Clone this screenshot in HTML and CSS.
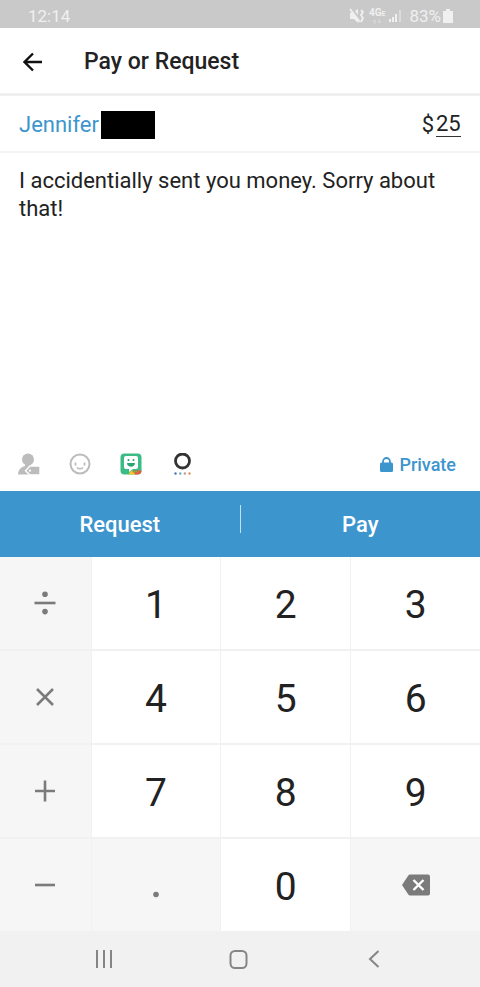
FILE: index.html
```html
<!DOCTYPE html>
<html lang="en">
<head>
<meta charset="utf-8">
<meta name="viewport" content="width=device-width, initial-scale=1">
<title>Pay or Request</title>
<link rel="stylesheet" href="styles.css">
</head>
<body>
<div class="status">
  <span>12:14</span>
  <div class="status-right">
    <svg width="16" height="16" viewBox="0 0 16 16" aria-hidden="true"><path d="M1 5l2-1 6 7v4l-4-4H1zM6 3l3-2v6z" fill="currentColor"/><path d="M1 1l10 13M12 2l2 2-2 3 2 3-2 4" fill="none" stroke="currentColor" stroke-width="1.800"/></svg>
    <span class="network"><b>4G<small>E</small></b><svg width="10" height="5" viewBox="0 0 10 5" aria-hidden="true"><path d="M3 5V1L1 3M7 0v4l2-2" fill="none" stroke="currentColor" opacity=".5"/></svg></span>
    <svg width="13" height="13" viewBox="0 0 13 13" aria-hidden="true"><path d="M1 13v-3M4 13V8M7 13V5" stroke="currentColor" stroke-width="2"/><path d="M11 13V1" stroke="currentColor" stroke-width="2" opacity=".5"/></svg>
    <span class="battery">83%<svg width="10" height="14" viewBox="0 0 10 14" aria-hidden="true"><path d="M3 0h4v2h3v12H0V2h3z" fill="currentColor"/></svg></span>
  </div>
</div>
<header class="header">
  <button class="back" type="button" aria-label="Back"><svg width="20" height="20" viewBox="0 0 20 20"><path d="M19 10H2M10 1.500L1.500 10l8.500 8.500" fill="none" stroke="currentColor" stroke-width="2.400"/></svg></button>
  <h1>Pay or Request</h1>
</header>
<main class="main">
  <div class="recipient">
    <a class="name" href="#">Jennifer</a><span class="redacted"></span>
    <label class="amount">$<input type="text" value="25" aria-label="Amount"></label>
  </div>
  <textarea class="note" aria-label="Note" spellcheck="false">I accidentially sent you money. Sorry about that!</textarea>
  <div class="tools">
    <button type="button" aria-label="Tag person"><svg width="22" height="22" viewBox="0 0 22 22"><circle cx="10" cy="6.500" r="6" fill="#bcbcbc"/><path d="M0 21.500c.5-5 2.500-7 7-8.500v-2h6v2l4 1.500v7z" fill="#bcbcbc"/><path d="M12 13h10v9H12l-4.500-4.200z" fill="#bcbcbc" stroke="#fff" stroke-width="1.400"/><circle cx="12" cy="17.700" r="1.100" fill="#fff"/></svg></button>
    <button type="button" aria-label="Emoji"><svg width="22" height="22" viewBox="0 0 22 22"><circle cx="11" cy="11" r="9.500" fill="none" stroke="#bcbcbc" stroke-width="2"/><path d="M6.500 9.500v3M15.500 9.500v3" stroke="#bcbcbc" stroke-width="1.800"/><path d="M8 14.500c1.500 1.800 4.500 1.800 6 0" fill="none" stroke="#bcbcbc" stroke-width="1.500"/></svg></button>
    <button type="button" aria-label="Bitmoji"><svg width="22" height="22" viewBox="0 0 22 22"><rect x=".5" y=".5" width="21" height="21" rx="4" fill="#3bbb86"/><path d="M6 3h10q2 0 2 2v9q0 2-2 2h-3l-4 3v-3H6q-2 0-2-2V5q0-2 2-2z" fill="#fff"/><path d="M7 10h8c0 5-8 5-8 0z" fill="#2ca574"/><path d="M8.500 6v2M13.500 6v2" stroke="#2ca574" stroke-width="1.600"/><path d="M9 21.500c0-2 1-3.500 4-4l3 4z" fill="#f3c52e"/><path d="M13 17.500h8.500q0 4-4 4H15z" fill="#e65b42"/><path d="M12 18h6l-2 1.500h-3z" fill="#8aa83c"/></svg></button>
    <button type="button" aria-label="Holler stickers"><svg width="22" height="22" viewBox="0 0 22 22"><circle cx="11.500" cy="8" r="7" fill="none" stroke="#333" stroke-width="2.800"/><circle cx="4.500" cy="20.500" r="1.200" fill="#4777a5"/><circle cx="9.200" cy="20.500" r="1.200" fill="#70a9cf"/><circle cx="13.900" cy="20.500" r="1.200" fill="#c79b90"/><circle cx="18.500" cy="20.500" r="1.200" fill="#dc925e"/></svg></button>
    <button class="privacy" type="button"><svg width="13" height="15" viewBox="0 0 13 15" aria-hidden="true"><rect y="5.500" width="13" height="9.500" rx="1.500" fill="currentColor"/><path d="M3 7V4.500a3.500 3.500 0 0 1 7 0V7" fill="none" stroke="currentColor" stroke-width="1.800"/></svg>Private</button>
  </div>
</main>
<div class="actions">
  <button type="button">Request</button>
  <i class="divider"></i>
  <button type="button">Pay</button>
</div>
<div class="keypad">
  <button class="op" type="button" aria-label="Divide"><svg width="22" height="24" viewBox="0 0 22 24"><path d="M.5 12h21" stroke="currentColor" stroke-width="2.600"/><circle cx="11" cy="3.200" r="2.800" fill="currentColor"/><circle cx="11" cy="20.600" r="2.800" fill="currentColor"/></svg></button>
  <button type="button">1</button>
  <button type="button">2</button>
  <button type="button">3</button>
  <button class="op" type="button" aria-label="Multiply"><svg width="22" height="22" viewBox="0 0 22 22"><path d="M3 3l16 16M19 3L3 19" stroke="currentColor" stroke-width="2.500"/></svg></button>
  <button type="button">4</button>
  <button type="button">5</button>
  <button type="button">6</button>
  <button class="op" type="button" aria-label="Add"><svg width="22" height="22" viewBox="0 0 22 22"><path d="M1 11h20M11 .5v21" stroke="currentColor" stroke-width="2.600"/></svg></button>
  <button type="button">7</button>
  <button type="button">8</button>
  <button type="button">9</button>
  <button class="op" type="button" aria-label="Subtract"><svg width="22" height="22" viewBox="0 0 22 22"><path d="M1 11h20" stroke="currentColor" stroke-width="2.600"/></svg></button>
  <button class="op" type="button" aria-label="Decimal point"><svg width="22" height="26" viewBox="0 0 22 26"><circle cx="11" cy="22.500" r="2.800" fill="currentColor"/></svg></button>
  <button type="button">0</button>
  <button class="op" type="button" aria-label="Delete"><svg width="28" height="22" viewBox="0 0 28 22"><path d="M8 .5h18q2 0 2 2v17q0 2-2 2H8q-1 0-1.700-1L0 11l6.300-9.500Q7 .5 8 .5z" fill="currentColor"/><path d="M11.500 6l10 10M21.500 6l-10 10" stroke="#fff" stroke-width="2.400"/></svg></button>
</div>
<nav class="system">
  <button type="button" aria-label="Recent apps"><svg width="18" height="18" viewBox="0 0 18 18"><path d="M2 0v18M9 0v18M16 0v18" stroke="currentColor" stroke-width="2"/></svg></button>
  <button type="button" aria-label="Home"><svg width="19" height="19" viewBox="0 0 19 19"><rect x="1.500" y="1" width="16" height="17" rx="4.500" fill="none" stroke="currentColor" stroke-width="2"/></svg></button>
  <button type="button" aria-label="Navigate back"><svg width="12" height="18" viewBox="0 0 12 18"><path d="M10.500 1L2 9l8.500 8" fill="none" stroke="currentColor" stroke-width="2"/></svg></button>
</nav>
</body>
</html>
```
FILE: styles.css
```css
* { box-sizing: border-box; }

body {
  margin: 0;
  min-height: 100vh;
  display: flex;
  flex-direction: column;
  background: #fff;
  color: #222;
  font-family: Roboto, sans-serif;
}

button, input, textarea {
  margin: 0;
  padding: 0;
  border: 0;
  background: none;
  color: inherit;
  font: inherit;
}

svg { display: block; }

.status {
  height: 28px;
  padding: 3px 27px 0 28px;
  display: flex;
  align-items: center;
  justify-content: space-between;
  background: #c9c9c9;
  color: #f0f0f0;
  font-size: 17px;
}

.status-right, .battery {
  display: flex;
  align-items: center;
}

.status-right { gap: 4px; }
.battery { gap: 2px; margin-left: 3px; }

.network {
  display: flex;
  flex-direction: column;
  align-items: center;
  font-size: 10px;
  line-height: 10px;
}

.network small { font-size: 7px; }

.header {
  height: 68px;
  padding: 2px 20px 0 23px;
  display: flex;
  align-items: center;
  gap: 41px;
  border-bottom: 3px solid #f0f0f0;
}

.back { color: #111; }

h1 {
  margin: 0;
  font-size: 23px;
  line-height: 28px;
  font-weight: 500;
}

.main {
  flex: 1;
  display: flex;
  flex-direction: column;
}

.recipient {
  height: 57px;
  padding: 2px 19px 0;
  display: flex;
  align-items: center;
  border-bottom: 2px solid #f3f3f3;
  font-size: 22px;
}

.name {
  color: #3d95ce;
  text-decoration: none;
}

.redacted {
  width: 54px;
  height: 28px;
  margin-left: 2px;
  background: #000;
}

.amount {
  margin-left: auto;
  display: flex;
  gap: 2px;
  line-height: 24px;
}

.amount input {
  width: 25px;
  height: 24px;
  border-bottom: 1px solid #333;
}

.note {
  flex: 1;
  width: 100%;
  padding: 14px 19px;
  resize: none;
  font-size: 22px;
  line-height: 28px;
  outline: 0;
}

.tools {
  padding: 0 24px 16px 18px;
  display: flex;
  align-items: center;
  gap: 29px;
}

.privacy {
  margin-left: auto;
  display: flex;
  align-items: center;
  gap: 6px;
  color: #3d95ce;
  font-size: 18px;
  font-weight: 500;
}

.actions {
  height: 66px;
  display: flex;
  background: #3d95ce;
  color: #fff;
  font-size: 22px;
  font-weight: 500;
}

.actions button { flex: 1; }

.divider {
  width: 1px;
  height: 28px;
  margin-top: 14px;
  background: #c5dff0;
}

.keypad {
  display: grid;
  grid-template-columns: 19fr 27fr 27fr 27fr;
  grid-auto-rows: 92px;
  gap: 2px 1px;
  background: #f1f1f1;
}

.keypad button {
  display: flex;
  align-items: center;
  justify-content: center;
  padding-top: 3px;
  background: #fff;
  font-size: 39px;
}

.keypad .op {
  padding-top: 0;
  background: #f6f6f6;
  color: #7b7b7b;
}

.system {
  height: 56px;
  padding: 0 38px 0 36px;
  display: grid;
  grid-template-columns: repeat(3, 1fr);
  background: #f1f1f1;
  color: #858585;
}

.system button {
  display: flex;
  align-items: center;
  justify-content: center;
}
```
